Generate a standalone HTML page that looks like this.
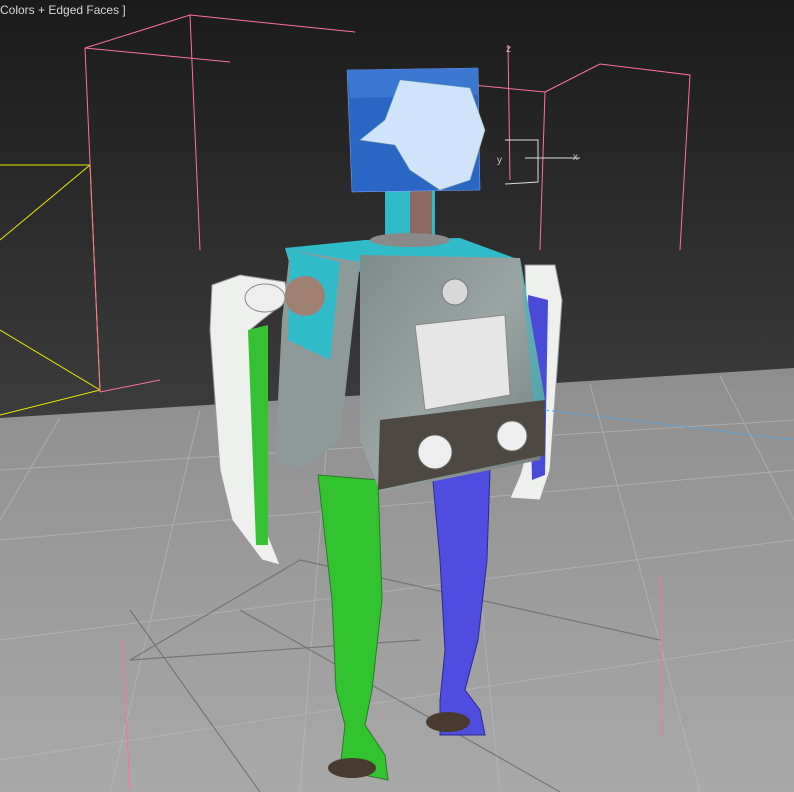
<!DOCTYPE html>
<html><head><meta charset="utf-8"><style>
html,body{margin:0;padding:0;width:794px;height:792px;overflow:hidden;background:#1c1c1c}
svg{display:block}
text{font-family:"Liberation Sans",sans-serif}
</style></head><body>
<svg width="794" height="792" viewBox="0 0 794 792" xmlns="http://www.w3.org/2000/svg">
<defs>
<linearGradient id="bg" x1="0" y1="0" x2="0" y2="1">
<stop offset="0" stop-color="#1b1b1b"/><stop offset="1" stop-color="#3c3c3c"/></linearGradient>
<linearGradient id="fl" x1="0" y1="0" x2="0" y2="1">
<stop offset="0" stop-color="#8e8e8e"/><stop offset="1" stop-color="#a9a9a9"/></linearGradient>
<linearGradient id="met" x1="0" y1="0" x2="1" y2="1">
<stop offset="0" stop-color="#7f8c8c"/><stop offset="0.5" stop-color="#9aa5a4"/><stop offset="1" stop-color="#6f7b7a"/></linearGradient>
</defs>
<rect width="794" height="420" fill="url(#bg)"/>
<polygon points="0,418 794,368 794,792 0,792" fill="url(#fl)"/>
<g stroke="#bcbcbc" stroke-width="1" fill="none" opacity="0.6">
<path d="M0,470 L794,420 M0,540 L794,470 M0,640 L794,540 M0,760 L794,640"/>
<path d="M60,418 L0,520 M200,410 L110,792 M330,400 L300,792 M460,392 L500,792 M590,384 L700,792 M720,376 L794,520"/>
</g>
<g stroke="#5a5a5a" stroke-width="1.2" fill="none" opacity="0.6">
<path d="M130,610 L260,792 M130,660 L420,640 M240,610 L560,792 M300,560 L660,640 M300,560 L130,660"/>
</g>
<text x="0" y="14" fill="#d6d6d6" font-size="12">Colors + Edged Faces ]</text>
<g stroke="#e8e800" stroke-width="1" fill="none">
<path d="M0,165 L90,165 L100,390 L0,415 M0,330 L100,390 M90,165 L0,240"/>
</g>
<g stroke="#ff6fa0" stroke-width="1" fill="none">
<path d="M85,48 L190,15 L355,32 M85,48 L100,392 M190,15 L200,250 M85,48 L230,62 M100,392 L160,380"/>
<path d="M600,64 L690,75 L680,250 M545,92 L540,250 M600,64 L545,92 M545,92 L420,80"/>
<path d="M122,640 L130,790 M660,575 L662,735 M508,45 L510,180"/>
</g>
<!-- arms -->
<polygon points="212,285 240,275 285,282 288,300 262,320 250,330 258,510 280,565 262,560 232,520 220,470 210,330" fill="#eef0ee" stroke="#999" stroke-width="1"/>
<polygon points="248,330 268,325 268,545 256,545" fill="#35c232"/>
<polygon points="525,265 555,265 562,300 550,470 540,500 510,498 520,475 530,440" fill="#eef0ee" stroke="#999"/>
<polygon points="528,295 548,300 545,475 532,480" fill="#4a4ad8"/>
<!-- legs -->
<polygon points="318,475 378,480 382,600 372,690 365,725 385,755 388,780 340,770 345,725 336,690 332,600" fill="#31c42e" stroke="#2a7a2a" stroke-width="1"/>
<polygon points="432,470 490,470 487,560 478,640 465,690 480,710 485,735 440,735 440,700 445,650 440,560" fill="#4e4de0" stroke="#2a2a90" stroke-width="1"/>
<ellipse cx="352" cy="768" rx="24" ry="10" fill="#4a3a30"/>
<ellipse cx="448" cy="722" rx="22" ry="10" fill="#4a3a30"/>
<!-- torso -->
<polygon points="285,248 365,240 460,238 520,260 380,262 300,300" fill="#2fbcc8"/>
<polygon points="290,250 360,262 340,440 300,470 275,460 282,320" fill="#8e9a9a"/>
<polygon points="290,250 340,262 330,360 288,340" fill="#2fbcc8"/>
<polygon points="360,255 520,258 545,400 540,460 380,492 360,440" fill="url(#met)"/>
<polygon points="520,258 545,400 535,420" fill="#2fbcc8" opacity="0.5"/>
<polygon points="380,420 545,400 545,455 378,490" fill="#4e4843"/>
<polygon points="415,325 505,315 510,395 425,410" fill="#e6e6e6" stroke="#888"/>
<circle cx="455" cy="292" r="13" fill="#d8d8d8" stroke="#777"/>
<circle cx="435" cy="452" r="17" fill="#eee" stroke="#666"/>
<circle cx="512" cy="436" r="15" fill="#eee" stroke="#666"/>
<circle cx="305" cy="296" r="20" fill="#a08070"/>
<ellipse cx="265" cy="298" rx="20" ry="14" fill="#eee" stroke="#888"/>
<!-- neck -->
<rect x="385" y="188" width="50" height="48" fill="#2fbcc8"/>
<rect x="410" y="188" width="22" height="48" fill="#8a6a60"/>
<ellipse cx="410" cy="240" rx="40" ry="7" fill="#8a8a8a"/>
<!-- head -->
<polygon points="347,70 478,68 480,190 352,192" fill="#2a66c4" stroke="#88aaff" stroke-width="0.5"/>
<polygon points="347,70 478,68 478,95 350,98" fill="#3a78d2"/>
<polygon points="400,80 470,88 485,130 470,180 440,190 410,170 395,145 360,140 385,120" fill="#cfe4fb" stroke="#8aa" stroke-width="0.6"/>
<g stroke="#ddd" fill="none" stroke-width="1"><path d="M505,140 L538,140 L538,182 L505,184 M525,158 L580,158"/></g>
<text x="497" y="163" fill="#ccc" font-size="10">y</text>
<text x="573" y="160" fill="#ccc" font-size="10">x</text>
<text x="506" y="52" fill="#ccc" font-size="10">z</text>
<line x1="545" y1="410" x2="794" y2="440" stroke="#3aaaff" stroke-dasharray="4,3"/>
</svg>
</body></html>
